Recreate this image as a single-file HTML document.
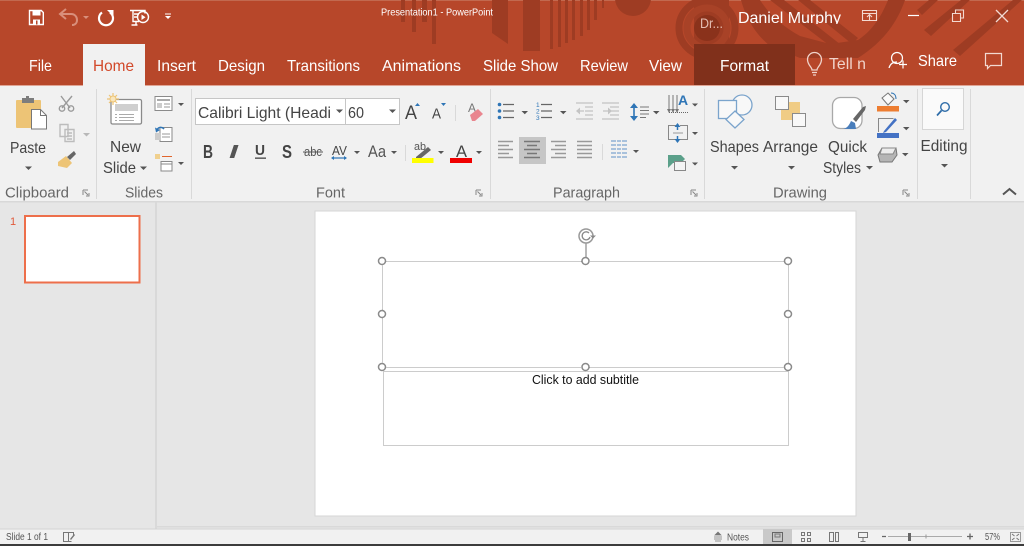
<!DOCTYPE html>
<html><head><meta charset="utf-8"><title>PowerPoint</title>
<style>
html,body{margin:0;padding:0;background:#e6e6e6;overflow:hidden}
svg{display:block}
text{font-family:"Liberation Sans",sans-serif}
.t{fill:#fff;font-size:16px}
.g{fill:#444;font-size:16px}
.l{fill:#666;font-size:15px}
.s{fill:#555;font-size:10px}
</style></head><body>
<svg width="1024" height="546" viewBox="0 0 1024 546" xmlns="http://www.w3.org/2000/svg">
<defs><clipPath id="nm"><rect x="730" y="5" width="115" height="19"/></clipPath>
<clipPath id="tb"><rect x="0" y="0" width="1024" height="85"/></clipPath></defs>
<rect width="1024" height="546" fill="#e6e6e6"/>
<!-- title bar -->
<rect width="1024" height="85" fill="#b7472a"/>
<rect width="1024" height="1" fill="#c2694f"/>
<g clip-path="url(#tb)" fill="#9e3c23">
<rect x="401" y="0" width="4" height="22"/><rect x="412" y="0" width="4" height="32"/><rect x="422" y="0" width="5" height="22"/><rect x="432" y="0" width="4" height="44"/>
<path d="M492 0h16v44l-16-11z"/><rect x="523" y="0" width="17" height="51"/>
<rect x="550" y="0" width="3" height="49"/><rect x="558" y="0" width="3" height="47"/><rect x="565" y="0" width="3" height="43"/><rect x="572" y="0" width="3" height="40"/><rect x="580" y="0" width="3" height="36"/><rect x="587" y="0" width="3" height="30"/><rect x="594" y="0" width="3" height="20"/><rect x="602" y="0" width="2" height="8"/>
<circle cx="633" cy="-2" r="18"/>
<!-- rings -->
<circle cx="707" cy="28" r="28" fill="none" stroke="#9e3c23" stroke-width="7"/>
<rect x="694" y="0" width="35" height="44"/>
<circle cx="707" cy="28" r="20" fill="none" stroke="#a84227" stroke-width="7"/>
<circle cx="707" cy="28" r="13" fill="#8a321b"/>
<!-- heart band -->
<path d="M741 0C747 22 758 36 770 46L800 58H858C880 44 896 26 905 0H888C880 20 870 32 858 40L830 44 800 36C785 28 770 16 760 0Z"/>
<path d="M770 0L838 52H850L784 0ZM798 0L852 44 858 38 810 0Z"/>
<path d="M917 10L929 0h9L922 15ZM924 30L961 0h9L931 36ZM953 50L1013 0h9L960 56Z"/>
</g>
<rect x="694" y="44" width="101" height="41" fill="#80301b"/>
<!-- QAT -->
<g fill="none" stroke="#fff" stroke-width="1.400">
<path d="M29.500 10.500h11.800l2 2v12H29.500z"/>
<rect x="32.500" y="10.500" width="8" height="5" fill="#fff" stroke="none"/>
<rect x="33" y="19.500" width="7" height="5" fill="#fff" stroke="none"/><rect x="36" y="20.500" width="1.500" height="4" fill="#b7472a" stroke="none"/>
<path d="M61 14h10c4 0 6 3 6 6s-2 5-5 5" stroke="#d98f7b" stroke-width="2"/><path d="M66 9l-6 5 6 5" stroke="#d98f7b" stroke-width="2"/>
<path d="M102 12.500a7 7 0 1 0 8 0" stroke-width="2.200"/>
<path d="M107 10h6.500v6.500z" fill="#fff" stroke="none"/>
<path d="M130 10.500h15v3M133 10.500v11h6M137.500 25h-6M136 21.500v3.500M134 14h5M134 17h3"/>
<circle cx="143" cy="17" r="5.500"/>
</g>
<path d="M141.500 14.500v5.500l4-2.700z" fill="#fff"/>
<path d="M83 16h6l-3 3z" fill="#d98f7b"/>
<path d="M165 13.500h6v1h-6zM165 16h6l-3 3z" fill="#fff"/>
<!-- Title -->
<text x="381" y="15.500" font-size="10.500" fill="#fff" textLength="112" lengthAdjust="spacingAndGlyphs">Presentation1  -  PowerPoint</text>
<text x="700" y="28" font-size="14" fill="#e3bcb0" textLength="23" lengthAdjust="spacingAndGlyphs">Dr...</text>
<text x="738" y="23" font-size="16" fill="#fff" clip-path="url(#nm)" textLength="103" lengthAdjust="spacingAndGlyphs">Daniel Murphy</text>
<!-- window -->
<g fill="none" stroke="#f3d9d1" stroke-width="1.100">
<path d="M862.500 10.500h14v10h-14zM862.500 13.500h14M869.500 20v-5M867 17l2.500-2.500 2.500 2.500"/>
<path d="M908 15.500h11" stroke="#fff" stroke-width="1.200"/>
<path d="M952.500 13.500h8v8h-8zM955.500 13v-3h8v8h-3"/>
<path d="M996 10l12 12M1008 10l-12 12" stroke-width="1.300"/>
</g>
<!-- tabs -->
<path d="M83 44h62v42H83z" fill="#f1f1f1"/>
<text class="t" x="29" y="71" textLength="23" lengthAdjust="spacingAndGlyphs">File</text>
<text x="93" y="71" font-size="16" fill="#d2492a" textLength="41" lengthAdjust="spacingAndGlyphs">Home</text>
<text class="t" x="157" y="71" textLength="39" lengthAdjust="spacingAndGlyphs">Insert</text>
<text class="t" x="218" y="71" textLength="47" lengthAdjust="spacingAndGlyphs">Design</text>
<text class="t" x="287" y="71" textLength="73" lengthAdjust="spacingAndGlyphs">Transitions</text>
<text class="t" x="382" y="71" textLength="79" lengthAdjust="spacingAndGlyphs">Animations</text>
<text class="t" x="483" y="71" textLength="75" lengthAdjust="spacingAndGlyphs">Slide Show</text>
<text class="t" x="580" y="71" textLength="48" lengthAdjust="spacingAndGlyphs">Review</text>
<text class="t" x="649" y="71" textLength="33" lengthAdjust="spacingAndGlyphs">View</text>
<text class="t" x="720" y="71" textLength="49" lengthAdjust="spacingAndGlyphs">Format</text>
<!-- tell -->
<g fill="none" stroke="#f0d3ca" stroke-width="1.300">
<path d="M812 70c0-3-4.500-5-4.500-10.500a7 7 0 0 1 14 0c0 5.500-4.500 7.500-4.500 10.500z"/><path d="M812 72.500h5M813 75h3"/>
</g>
<text x="829" y="69" font-size="16" fill="#f0d3ca" textLength="37" lengthAdjust="spacingAndGlyphs">Tell n</text>
<g fill="none" stroke="#fff" stroke-width="1.200">
<circle cx="897" cy="58" r="5.500"/><path d="M889 68c1-4 4-6 8-6M899 64.500h8M903 60.500v8"/>
<path d="M985.500 53.500h16v12h-11l-3 3v-3h-2z" stroke="#f3d9d1"/>
</g>
<text class="t" x="918" y="66" textLength="39" lengthAdjust="spacingAndGlyphs">Share</text>

<!-- ribbon -->
<rect x="0" y="85" width="1024" height="117" fill="#f1f1f1"/>
<rect x="0" y="85" width="83" height="1" fill="#e0a595"/><rect x="145" y="85" width="879" height="1" fill="#e0a595"/>
<rect x="0" y="201" width="1024" height="1.500" fill="#d8d8d8"/>
<g fill="#d9d9d9"><rect x="96" y="89" width="1" height="110"/><rect x="191" y="89" width="1" height="110"/><rect x="490" y="89" width="1" height="110"/><rect x="704" y="89" width="1" height="110"/><rect x="917" y="89" width="1" height="110"/><rect x="970" y="89" width="1" height="110"/></g>

<!-- clipboard -->
<rect x="16" y="100" width="25" height="28" rx="1" fill="#edc476"/>
<rect x="22" y="98" width="12" height="5" fill="#7d7d7d"/><rect x="26" y="96" width="3" height="3" fill="#7d7d7d"/>
<path d="M31.500 109.500h9l6 6v13.500h-15z" fill="#fff" stroke="#777"/><path d="M40.500 109.500v6h6" fill="none" stroke="#777"/>
<text class="g" x="10" y="153" textLength="36" lengthAdjust="spacingAndGlyphs">Paste</text>
<path d="M25 166.500h7l-3.500 3.500z" fill="#555"/>
<g fill="none" stroke="#9a9a9a" stroke-width="1.400">
<path d="M61 96l9 12M72 96l-10 12"/><circle cx="62" cy="108.500" r="2.700"/><circle cx="71" cy="108.500" r="2.700"/>
<path d="M60 124.500h8v12h-8zM65 129.500h9v12h-9z" stroke="#bcbcbc" fill="#f1f1f1"/><path d="M67 133h5M67 136h5M67 139h5" stroke="#bcbcbc"/>
</g>
<path d="M83 133h7l-3.500 3.500z" fill="#b8b8b8"/>
<path d="M58 162l8-6 6 7-5 5-9-2z" fill="#edc476"/><path d="M67 157l7-6 2 3-6 6z" fill="#666"/>
<text class="l" x="5" y="197.500" textLength="64" lengthAdjust="spacingAndGlyphs">Clipboard</text>
<g fill="none" stroke="#888"><path d="M83 190h5M83 190v5M84.500 191.500l3.500 3.500"/><path d="M89 193v3h-3"/></g>

<!-- slides -->
<rect x="111" y="99.500" width="30.500" height="24.500" rx="1.500" fill="#fff" stroke="#8a8a8a" stroke-width="1.300"/>
<rect x="115" y="104" width="23" height="7" fill="#cfcfcf"/><g fill="#aaa"><rect x="119" y="114" width="15" height="1"/><rect x="119" y="117" width="15" height="1"/><rect x="119" y="120" width="15" height="1"/><rect x="115" y="114" width="2" height="1"/><rect x="115" y="117" width="2" height="1"/><rect x="115" y="120" width="2" height="1"/></g>
<g stroke="#edc476" stroke-width="1.200"><path d="M113 93v12M107 99h12M109 95l8 8M117 95l-8 8"/></g><circle cx="113" cy="99" r="3" fill="#f8e6bd" stroke="#edc476"/>
<text class="g" x="110" y="152" textLength="31" lengthAdjust="spacingAndGlyphs">New</text>
<text class="g" x="103" y="173" textLength="33" lengthAdjust="spacingAndGlyphs">Slide</text>
<path d="M140 166.500h7l-3.500 3.500z" fill="#555"/>
<rect x="155" y="96.500" width="17" height="14" fill="#fff" stroke="#8a8a8a"/><rect x="157" y="99" width="13" height="2" fill="#aaa"/><rect x="157" y="103" width="5" height="5" fill="#ccc"/><path d="M164 104h6M164 107h6" stroke="#999"/>
<path d="M178 103h6l-3 3z" fill="#555"/>
<rect x="160" y="127.500" width="12" height="14" fill="#fff" stroke="#8a8a8a"/><path d="M162 134h8M162 137h8" stroke="#999"/><rect x="155" y="133" width="6" height="7" fill="#ccc"/>
<path d="M157 130a4 4 0 0 1 7-1" fill="none" stroke="#2e75b6" stroke-width="1.500"/><path d="M155 127.500l1 5 4-2.500z" fill="#2e75b6"/>
<rect x="155" y="154" width="5" height="5" fill="#f0d08e"/><path d="M162 156.500h10" stroke="#e1652d"/><rect x="161" y="161.500" width="11" height="9.500" fill="#fff" stroke="#8a8a8a"/><path d="M161 164h11" stroke="#8a8a8a"/>
<path d="M178 162h6l-3 3z" fill="#555"/>
<text class="l" x="125" y="197.500" textLength="38" lengthAdjust="spacingAndGlyphs">Slides</text>

<!-- font -->
<rect x="195.500" y="98.500" width="150" height="26" fill="#fff" stroke="#c6c6c6"/>
<rect x="345.500" y="98.500" width="54" height="26" fill="#fff" stroke="#c6c6c6"/>
<text x="198" y="118" font-size="16" fill="#444" textLength="133" lengthAdjust="spacingAndGlyphs">Calibri Light (Headi</text>
<path d="M336 109.500h7l-3.500 3.500z" fill="#555"/>
<text x="348" y="118" font-size="16" fill="#444" textLength="16" lengthAdjust="spacingAndGlyphs">60</text>
<path d="M389 109.500h7l-3.500 3.500z" fill="#555"/>
<text x="405" y="119" font-size="19" fill="#444" textLength="12" lengthAdjust="spacingAndGlyphs">A</text>
<path d="M415 106h5l-2.500-3z" fill="#2e75b6"/>
<text x="432" y="118.500" font-size="15" fill="#444" textLength="9" lengthAdjust="spacingAndGlyphs">A</text>
<path d="M441 103h5l-2.500 3z" fill="#2e75b6"/>
<rect x="455" y="105" width="1" height="16" fill="#d9d9d9"/>
<text x="468" y="112" font-size="12" fill="#777">A</text>
<path d="M470 115l8-6 5 5-8 7h-3z" fill="#e9868f"/>
<text x="203" y="158" font-size="18" font-weight="bold" fill="#444" textLength="10" lengthAdjust="spacingAndGlyphs">B</text>
<text x="229" y="158" font-size="18" font-weight="bold" font-style="italic" fill="#555" textLength="9" lengthAdjust="spacingAndGlyphs">I</text>
<text x="255" y="155" font-size="15" font-weight="bold" fill="#444" textLength="10" lengthAdjust="spacingAndGlyphs">U</text><rect x="255" y="157.500" width="11" height="1.300" fill="#444"/>
<text x="282" y="158" font-size="18" font-weight="bold" fill="#444" textLength="10" lengthAdjust="spacingAndGlyphs">S</text>
<text x="304" y="156" font-size="13" fill="#555" textLength="18" lengthAdjust="spacingAndGlyphs">abc</text><rect x="303" y="151.500" width="20" height="1" fill="#555"/>
<text x="332" y="155" font-size="13" fill="#444" textLength="15" lengthAdjust="spacingAndGlyphs">AV</text>
<path d="M332 158h14" stroke="#2e75b6" stroke-width="1.200"/><path d="M331 158l3-2v4zM347 158l-3-2v4z" fill="#2e75b6"/>
<path d="M354 151h6l-3 3z" fill="#555"/>
<text x="368" y="157" font-size="17" fill="#555" textLength="18" lengthAdjust="spacingAndGlyphs">Aa</text>
<path d="M391 151h6l-3 3z" fill="#555"/>
<rect x="405" y="145" width="1" height="16" fill="#d9d9d9"/>
<text x="414" y="150" font-size="11" fill="#555" textLength="12" lengthAdjust="spacingAndGlyphs">ab</text>
<path d="M416 157l12-10 3 3-11 9h-4z" fill="#666"/>
<rect x="412" y="158" width="21.500" height="5" fill="#ffff00"/>
<path d="M438 151h6l-3 3z" fill="#555"/>
<text x="456" y="157" font-size="17" fill="#444" textLength="11" lengthAdjust="spacingAndGlyphs">A</text>
<rect x="450" y="158" width="22" height="5" fill="#f00000"/>
<path d="M476 151h6l-3 3z" fill="#555"/>
<text class="l" x="316" y="197.500" textLength="29" lengthAdjust="spacingAndGlyphs">Font</text>
<g fill="none" stroke="#888"><path d="M476 190h5M476 190v5M477.500 191.500l3.500 3.500"/><path d="M482 193v3h-3"/></g>

<!-- paragraph -->
<g fill="#2e75b6"><circle cx="499.500" cy="104.500" r="1.800"/><circle cx="499.500" cy="111" r="1.800"/><circle cx="499.500" cy="117.500" r="1.800"/></g>
<path d="M503 104.500h11M503 111h11M503 117.500h11" stroke="#666" stroke-width="1.200"/>
<path d="M521.500 111h6.500l-3.200 3.200z" fill="#555"/>
<g font-size="6.500" fill="#2e75b6"><text x="536" y="107">1</text><text x="536" y="113.500">2</text><text x="536" y="120">3</text></g>
<path d="M541 104.500h11M541 111h11M541 117.500h11" stroke="#666" stroke-width="1.200"/>
<path d="M560 111h6.500l-3.200 3.200z" fill="#555"/>
<g stroke="#c4c4c4" stroke-width="1.300"><path d="M576 103h17M585 107h8M585 111h8M585 115h8M576 119h17M578 111h6"/></g><path d="M576 111l4-3.500v7z" fill="#c4c4c4"/>
<g stroke="#c4c4c4" stroke-width="1.300"><path d="M602 103h17M610 107h9M610 111h9M610 115h9M602 119h17M603 111h6"/></g><path d="M612 111l-4-3.500v7z" fill="#c4c4c4"/>
<path d="M634 105v14" stroke="#2e75b6" stroke-width="1.600"/><path d="M630 108l4-5 4 5zM630 116l4 5 4-5z" fill="#2e75b6"/>
<path d="M640 107h9M640 110.500h9M640 114h9M640 117.500h6" stroke="#777" stroke-width="1.100"/>
<path d="M653 111h6.500l-3.200 3.200z" fill="#555"/>
<path d="M669 95v16M673 95v16M677 95v16" stroke="#777"/><path d="M667 109l2 4 2-4zM671 109l2 4 2-4zM675 109l2 4 2-4z" fill="#777"/>
<text x="678" y="105" font-size="14" fill="#2e75b6" font-weight="bold">A</text><path d="M669 112.500h20" stroke="#666" stroke-dasharray="1 1"/>
<path d="M692 103.500h6l-3 3z" fill="#555"/>
<g fill="none" stroke="#888"><path d="M668.500 125.500h19v14h-19z"/></g><rect x="676" y="123" width="4" height="4" fill="#f1f1f1"/><rect x="676" y="138" width="4" height="4" fill="#f1f1f1"/>
<path d="M677.500 125v5M677.500 136v6" stroke="#2e75b6" stroke-width="1.500"/><path d="M674.500 127l3-4 3 4zM674.500 139l3 4 3-4z" fill="#2e75b6"/><path d="M673 133h10" stroke="#999"/>
<path d="M692 132h6l-3 3z" fill="#555"/>
<path d="M668 155h13l4 4-4 4h-8l-5 5z" fill="#5ba08a"/><rect x="674.500" y="161.500" width="11" height="9" fill="#f4f4f4" stroke="#888"/>
<path d="M692 162.500h6l-3 3z" fill="#555"/>
<g stroke="#999" stroke-width="1.500"><path d="M498 141.500h15M498 145.500h11M498 149.500h15M498 153.500h11M498 157.500h15"/></g>
<rect x="519" y="137" width="27" height="27" fill="#c6c6c6"/>
<g stroke="#777" stroke-width="1.500"><path d="M524 141.500h16M527 145.500h10M524 149.500h16M527 153.500h10M524 157.500h16"/></g>
<g stroke="#999" stroke-width="1.500"><path d="M551 141.500h15M555 145.500h11M551 149.500h15M555 153.500h11M551 157.500h15M577 141.500h15M577 145.500h15M577 149.500h15M577 153.500h15M577 157.500h15"/></g>
<rect x="602" y="144" width="1" height="16" fill="#d9d9d9"/>
<g stroke="#8fb1d6" stroke-width="1.500"><path d="M611 141h16M611 145h16M611 149h16M611 153h16M611 157h16"/></g><path d="M616.500 140v18M621.500 140v18" stroke="#f1f1f1"/>
<path d="M633 150h6l-3 3z" fill="#555"/>
<text class="l" x="553" y="197.500" textLength="67" lengthAdjust="spacingAndGlyphs">Paragraph</text>
<g fill="none" stroke="#888"><path d="M691 190h5M691 190v5M692.500 191.500l3.500 3.500"/><path d="M697 193v3h-3"/></g>

<!-- drawing -->
<g fill="#f8f8f8" stroke="#7ba4cc" stroke-width="1.300">
<circle cx="742" cy="105" r="10"/><rect x="718.500" y="100.500" width="18" height="18"/><path d="M735 111l9 8.500-9 8.500-9-8.500z"/>
</g>
<rect x="775.500" y="96.500" width="13" height="13" fill="#f8f8f8" stroke="#8a8a8a"/>
<path d="M781 110h8v-8h11v11h-8v7h-11z" fill="#f0cc85"/><rect x="792.500" y="113.500" width="13" height="13" fill="#f8f8f8" stroke="#8a8a8a"/>
<rect x="832.500" y="97.500" width="29.500" height="31" rx="8" fill="#fff" stroke="#a8a8a8" stroke-width="1.300"/>
<path d="M853 119l10-12 3-1-1 4-9 12z" fill="#666"/><path d="M842 129c4 0 7-3 9-8l4 2 1 6z" fill="#4a7ebb"/>
<text class="g" x="710" y="152" textLength="49" lengthAdjust="spacingAndGlyphs">Shapes</text>
<text class="g" x="763" y="152" textLength="55" lengthAdjust="spacingAndGlyphs">Arrange</text>
<text class="g" x="828" y="152" textLength="39" lengthAdjust="spacingAndGlyphs">Quick</text>
<text class="g" x="823" y="173" textLength="38" lengthAdjust="spacingAndGlyphs">Styles</text>
<path d="M731 166h7l-3.500 3.500zM788 166h7l-3.500 3.500zM866 166h7l-3.500 3.500z" fill="#555"/>
<path d="M882 98l6-5 6 6-6 6z" fill="#fafafa" stroke="#777"/><path d="M891 93c3 0 5 2 5 6" fill="none" stroke="#2e75b6"/><rect x="877" y="106" width="22" height="5.500" fill="#ed7d31"/>
<path d="M903 100h6.500l-3.200 3.200z" fill="#555"/>
<path d="M878.500 132v-13.500h15" fill="none" stroke="#888"/><path d="M884 131l11-13 2 2-11 12-3 1z" fill="#4472c4"/><rect x="877" y="133" width="22" height="5" fill="#4472c4"/>
<path d="M903 127h6.500l-3.200 3.200z" fill="#555"/>
<path d="M878 155l4-7h14l1 7-5 7h-12z" fill="#b5b5b5" stroke="#777"/><path d="M882 148l-2 6h13l3-6z" fill="#ececec" stroke="#888"/>
<path d="M902 153h6.500l-3.200 3.200z" fill="#555"/>
<text class="l" x="773" y="197.500" textLength="54" lengthAdjust="spacingAndGlyphs">Drawing</text>
<g fill="none" stroke="#888"><path d="M903 190h5M903 190v5M904.500 191.500l3.500 3.500"/><path d="M909 193v3h-3"/></g>

<!-- editing -->
<rect x="922.500" y="88.500" width="41" height="41" fill="#fafafa" stroke="#d6d6d6"/>
<circle cx="945" cy="107" r="4.300" fill="none" stroke="#2e6ca8" stroke-width="1.400"/><path d="M941.500 110.500l-4.500 5" stroke="#2e6ca8" stroke-width="1.700"/>
<text class="g" x="920.500" y="151" textLength="47" lengthAdjust="spacingAndGlyphs">Editing</text>
<path d="M941 164h7l-3.500 3.500z" fill="#555"/>
<path d="M1003 194.500l6.500-5.500 6.500 5.500" fill="none" stroke="#555" stroke-width="2"/>

<!-- pane -->
<rect x="155" y="202" width="2" height="327" fill="#d9d9d9"/>
<rect x="157" y="526" width="867" height="1.500" fill="#d9d9d9"/>
<text x="10" y="225" font-size="11" fill="#e1593a">1</text>
<rect x="25" y="216" width="114.500" height="66.500" fill="#fff" stroke="#ed6f4b" stroke-width="2"/>

<!-- slide -->
<rect x="314.500" y="210.500" width="542" height="306" fill="#d6d6d6"/>
<rect x="315.500" y="211.500" width="540" height="304" fill="#fff"/>
<rect x="382.500" y="261.500" width="406" height="106" fill="none" stroke="#999" stroke-dasharray="1 1"/>
<rect x="383.500" y="371.500" width="405" height="74" fill="none" stroke="#999" stroke-dasharray="1 1"/>
<text x="532" y="384" font-size="13" fill="#111" textLength="107" lengthAdjust="spacingAndGlyphs">Click to add subtitle</text>
<path d="M586 243v15" stroke="#8a8a8a" stroke-width="1.200"/>
<circle cx="586" cy="236" r="7" fill="#fff" stroke="#999" stroke-width="1.500"/><path d="M589 233a4 4 0 1 0 1 4" fill="none" stroke="#888" stroke-width="1.300"/><path d="M590 235.500h6l-3 3z" fill="#888"/>
<g fill="#fff" stroke="#8a8a8a" stroke-width="1.500">
<circle cx="382" cy="261" r="3.500"/><circle cx="585.500" cy="261" r="3.500"/><circle cx="788" cy="261" r="3.500"/>
<circle cx="382" cy="314" r="3.500"/><circle cx="788" cy="314" r="3.500"/>
<circle cx="382" cy="367" r="3.500"/><circle cx="585.500" cy="367" r="3.500"/><circle cx="788" cy="367" r="3.500"/>
</g>

<!-- status -->
<rect x="0" y="529" width="1024" height="15" fill="#f1f1f1"/>
<rect x="0" y="528.500" width="1024" height="1" fill="#d4d4d4"/>
<rect x="0" y="544" width="1024" height="2" fill="#3c3c3c"/>
<text class="s" x="6" y="540" textLength="42" lengthAdjust="spacingAndGlyphs">Slide 1 of 1</text>
<path d="M63.500 532.500h5v9h-5zM68.500 532.500h5v3M68.500 541.500h3" fill="none" stroke="#777"/><path d="M70 539l4-5 1 1-4 5z" fill="#777"/>
<path d="M715 535h6l-3-3zM714 537h8M714 539h8M715 541h6" stroke="#777" fill="#777" stroke-width=".7"/>
<text class="s" x="727" y="540.500" textLength="22" lengthAdjust="spacingAndGlyphs">Notes</text>
<rect x="763" y="529" width="29" height="15" fill="#c9c9c9"/>
<path d="M772.500 532.500h10v9h-10z" fill="none" stroke="#666"/><rect x="775" y="534" width="5" height="3" fill="none" stroke="#777"/>
<g fill="none" stroke="#777"><path d="M801.500 532.500h3v3h-3zM807.500 532.500h3v3h-3zM801.500 538.500h3v3h-3zM807.500 538.500h3v3h-3z"/>
<path d="M829.500 532.500h4v9h-4zM835.500 532.500h3v9h-3z"/>
<path d="M858.500 532.500h9v5h-9zM863 537.500v4M860.500 541.500h5"/></g>
<path d="M882 536.500h4M967 536.500h6M970 533.500v6" stroke="#666" stroke-width="1.300"/>
<path d="M888 536.500h74" stroke="#aaa"/><path d="M926 534.500v4" stroke="#999"/>
<rect x="908" y="533" width="3" height="8" fill="#666"/>
<text class="s" x="985" y="540" textLength="15" lengthAdjust="spacingAndGlyphs">57%</text>
<path d="M1010.500 532.500h10v9h-10z" fill="none" stroke="#999"/><path d="M1012 534l2.500 2M1019 534l-2.500 2M1012 540l2.500-2M1019 540l-2.500-2" stroke="#777"/>
</svg>
</body></html>
